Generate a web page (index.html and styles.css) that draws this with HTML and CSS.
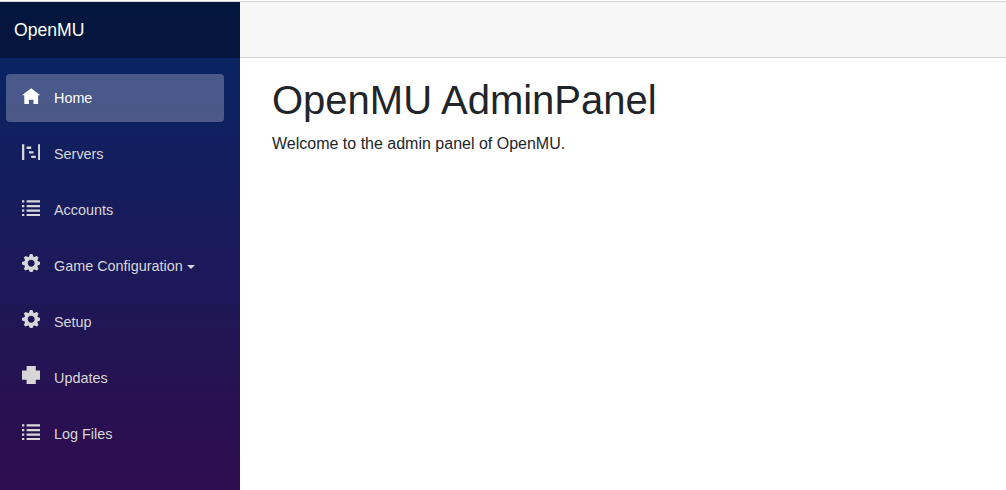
FILE: index.html
```html
<!DOCTYPE html>
<html>
<head>
    <title>OpenMU AdminPanel</title>
    <link rel="stylesheet" href="styles.css">
</head>
<body>
    <div class="page">
        <div class="sidebar">
            <div class="brand-row">
                <a class="brand" href="#">OpenMU</a>
            </div>
            <nav class="nav-list">
                <a class="nav-link active" href="#">
                    <svg class="icon" viewBox="0 -1 8 8"><path d="M4 0l-4 3h1v4h2v-2h2v2h2v-4.03l1 .03-4-3z"/></svg>
                    Home
                </a>
                <a class="nav-link" href="#">
                    <svg class="icon" viewBox="0 -1 8 8"><path d="M0 0v7h1v-7h-1zm7 0v7h1v-7h-1zm-5 1v1h2v-1h-2zm1 2v1h2v-1h-2zm1 2v1h2v-1h-2z"/></svg>
                    Servers
                </a>
                <a class="nav-link" href="#">
                    <svg class="icon" viewBox="0 -1 8 8"><path d="M0 0v1h1v-1h-1zm2 0v1h6v-1h-6zm-2 2v1h1v-1h-1zm2 0v1h6v-1h-6zm-2 2v1h1v-1h-1zm2 0v1h6v-1h-6zm-2 2v1h1v-1h-1zm2 0v1h6v-1h-6z"/></svg>
                    Accounts
                </a>
                <a class="nav-link" href="#">
                    <svg class="icon" viewBox="0 0 8 8"><path d="M3.5 0l-.5 1.19c-.1.03-.19.08-.28.13l-1.19-.5-.72.72.5 1.19c-.05.1-.09.18-.13.28l-1.19.5v1l1.19.5c.04.1.08.18.13.28l-.5 1.19.72.72 1.19-.5c.09.04.18.09.28.13l.5 1.19h1l.5-1.19c.09-.04.19-.08.28-.13l1.19.5.72-.72-.5-1.19c.04-.09.09-.19.13-.28l1.19-.5v-1l-1.19-.5c-.03-.09-.08-.19-.13-.28l.5-1.19-.72-.72-1.19.5c-.09-.04-.19-.09-.28-.13l-.5-1.19h-1zm.5 2.5c.83 0 1.5.67 1.5 1.5s-.67 1.5-1.5 1.5-1.5-.67-1.5-1.5.67-1.5 1.5-1.5z"/></svg>
                    Game Configuration
                    <span class="caret"></span>
                </a>
                <a class="nav-link" href="#">
                    <svg class="icon" viewBox="0 0 8 8"><path d="M3.5 0l-.5 1.19c-.1.03-.19.08-.28.13l-1.19-.5-.72.72.5 1.19c-.05.1-.09.18-.13.28l-1.19.5v1l1.19.5c.04.1.08.18.13.28l-.5 1.19.72.72 1.19-.5c.09.04.18.09.28.13l.5 1.19h1l.5-1.19c.09-.04.19-.08.28-.13l1.19.5.72-.72-.5-1.19c.04-.09.09-.19.13-.28l1.19-.5v-1l-1.19-.5c-.03-.09-.08-.19-.13-.28l.5-1.19-.72-.72-1.19.5c-.09-.04-.19-.09-.28-.13l-.5-1.19h-1zm.5 2.5c.83 0 1.5.67 1.5 1.5s-.67 1.5-1.5 1.5-1.5-.67-1.5-1.5.67-1.5 1.5-1.5z"/></svg>
                    Setup
                </a>
                <a class="nav-link" href="#">
                    <svg class="icon" viewBox="0 0 8 8"><path d="M2 0v2h-2v4h2v2h4v-2h2v-4h-2v-2h-4z"/></svg>
                    Updates
                </a>
                <a class="nav-link" href="#">
                    <svg class="icon" viewBox="0 -1 8 8"><path d="M0 0v1h1v-1h-1zm2 0v1h6v-1h-6zm-2 2v1h1v-1h-1zm2 0v1h6v-1h-6zm-2 2v1h1v-1h-1zm2 0v1h6v-1h-6zm-2 2v1h1v-1h-1zm2 0v1h6v-1h-6z"/></svg>
                    Log Files
                </a>
            </nav>
        </div>
        <div class="main">
            <div class="top-row"></div>
            <div class="content">
                <h1>OpenMU AdminPanel</h1>
                <p>Welcome to the admin panel of OpenMU.</p>
            </div>
        </div>
    </div>
</body>
</html>
```

FILE: styles.css
```css
html, body {
    height: 100%;
    margin: 0;
}

body {
    font-family: "Liberation Sans", Arial, sans-serif;
    font-size: 16px;
    line-height: 1.5;
    color: #212529;
    background-color: #fff;
    overflow: hidden;
}

a {
    text-decoration: none;
}

.page {
    display: flex;
    height: 100%;
    margin-top: 1px;
    border-top: 1px solid #d6d5d5;
    box-sizing: border-box;
}

.sidebar {
    width: 240px;
    flex-shrink: 0;
    background-image: linear-gradient(180deg, #052767 0%, #3a0647 125%);
}

.brand-row {
    display: flex;
    align-items: center;
    height: 56px;
    padding-left: 14px;
    background-color: rgba(0, 0, 0, 0.4);
}

.brand {
    color: #fff;
    font-size: 17.6px;
}

.nav-list {
    display: flex;
    flex-direction: column;
    gap: 8px;
    padding: 16px 16px 0 6px;
}

.nav-link {
    display: flex;
    align-items: center;
    height: 48px;
    padding-top: 2px;
    padding-left: 16px;
    border-radius: 4px;
    box-sizing: border-box;
    color: #d7d7d7;
    font-size: 14.4px;
}

.nav-link.active {
    background-color: rgba(255, 255, 255, 0.25);
    color: #fff;
}

.icon {
    width: 18.4px;
    height: 18.4px;
    margin: -8px 13.6px 0 0;
    fill: currentColor;
}

.caret {
    width: 0;
    height: 0;
    margin-left: 4px;
    border-top: 4px solid currentColor;
    border-left: 4px solid transparent;
    border-right: 4px solid transparent;
}

.main {
    flex: 1;
    min-width: 0;
}

.top-row {
    height: 55px;
    background-color: #f7f7f7;
    border-bottom: 1px solid #d6d5d5;
}

.content {
    padding: 18px 32px 0;
}

h1 {
    margin: 0 0 8px;
    font-size: 40px;
    font-weight: 500;
    line-height: 1.2;
}

p {
    margin: 0;
}
```
